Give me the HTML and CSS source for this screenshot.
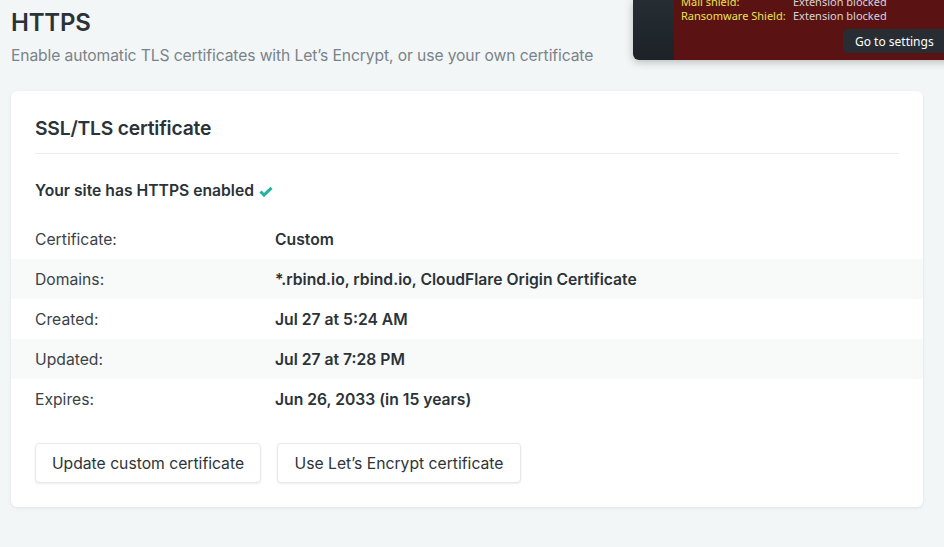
FILE: index.html
```html
<!DOCTYPE html>
<html>
<head>
<meta charset="utf-8">
<link rel="stylesheet" href="styles.css">
</head>
<body>
<div class="page">
  <header class="head">
    <h1 class="title">HTTPS</h1>
    <p class="subtitle">Enable automatic TLS certificates with Let’s Encrypt, or use your own certificate</p>
  </header>
  <section class="card">
    <h2 class="card-title">SSL/TLS certificate</h2>
    <p class="status">Your site has HTTPS enabled <svg class="check" width="14" height="11" viewBox="0 0 14 11"><path d="M1.5 5.5 L5 9 L12.5 1.8" fill="none" stroke="#1fb2a0" stroke-width="3" stroke-linejoin="miter"/></svg></p>
    <dl class="rows">
      <div class="row"><dt>Certificate:</dt><dd>Custom</dd></div>
      <div class="row alt"><dt>Domains:</dt><dd>*.rbind.io, rbind.io, CloudFlare Origin Certificate</dd></div>
      <div class="row"><dt>Created:</dt><dd>Jul 27 at 5:24 AM</dd></div>
      <div class="row alt"><dt>Updated:</dt><dd>Jul 27 at 7:28 PM</dd></div>
      <div class="row"><dt>Expires:</dt><dd>Jun 26, 2033 (in 15 years)</dd></div>
    </dl>
    <div class="actions">
      <button class="btn btn-1">Update custom certificate</button>
      <button class="btn btn-2">Use Let’s Encrypt certificate</button>
    </div>
  </section>
</div>
<div class="popup">
  <div class="popup-side"></div>
  <div class="popup-main">
    <div class="line l1"><span class="k">Mail shield:</span><span class="v">Extension blocked</span></div>
    <div class="line"><span class="k">Ransomware Shield:</span><span class="v">Extension blocked</span></div>
    <button class="settings">Go to settings</button>
  </div>
</div>
</body>
</html>
```

FILE: styles.css
```css
* { box-sizing: border-box; }
html, body { margin: 0; padding: 0; }
body {
  background: #f3f6f7;
  font-family: Inter, "Noto Sans", sans-serif;
  color: #2d3439;
  width: 944px;
  height: 547px;
  overflow: hidden;
  position: relative;
}
.page { padding: 8px 21px 0 11px; }
.head { height: 83px; }
.title {
  margin: 0;
  font-size: 24px;
  font-weight: 600;
  line-height: 30px;
  color: #2b3338;
  letter-spacing: -0.2px;
}
.subtitle {
  margin: 8px 0 0;
  font-size: 15.65px;
  line-height: 20px;
  color: #7a8389;
  letter-spacing: -0.1px;
}
.card {
  background: #fff;
  border-radius: 6px;
  box-shadow: 0 1px 3px rgba(30, 45, 60, 0.1);
  padding: 24px 0 24px;
  width: 912px;
  height: 416px;
}
.card-title {
  margin: 0 24px;
  font-size: 19.3px;
  font-weight: 600;
  line-height: 26px;
  padding: 0 0 12px;
  border-bottom: 1px solid #ebedef;
  color: #2b3338;
  letter-spacing: -0.2px;
}
.status {
  margin: 0 24px;
  height: 65px;
  display: flex;
  align-items: center;
  font-size: 15.7px;
  font-weight: 600;
  padding-top: 8px;
  color: #2b3338;
}
.check { margin-left: 5px; margin-top: 1px; }
.rows { margin: 0; }
.row {
  display: flex;
  align-items: center;
  height: 40px;
  padding: 0 24px;
  font-size: 15.7px;
}
.row.alt { background: #f8f9f9; }
.row dt { width: 240px; color: #3a4247; }
.row dd { margin: 0; font-weight: 600; color: #2b3338; }
.actions {
  display: flex;
  gap: 16px;
  padding: 24px 24px 0;
}
.btn {
  font-family: inherit;
  font-size: 15.7px;
  color: #2d3439;
  background: #fff;
  border: 1px solid #e6e9eb;
  border-radius: 4px;
  box-shadow: 0 1px 2px rgba(0, 0, 0, 0.08);
  height: 40px;
  padding: 0 14px;
}
.btn-1 { width: 226px; }
.btn-2 { width: 244px; }
.popup {
  position: absolute;
  left: 633px;
  top: 0;
  width: 320px;
  height: 60px;
  display: flex;
  border-radius: 0 0 0 6px;
  overflow: hidden;
  box-shadow: 0 2px 8px rgba(0, 0, 0, 0.25);
  font-family: "Noto Sans", Inter, sans-serif;
  font-size: 11px;
}
.popup-side {
  width: 41px;
  background: linear-gradient(#262d33, #1c2227);
}
.popup-main {
  flex: 1;
  background: #5a1212;
  padding: 0 0 0 7px;
  position: relative;
}
.line { display: flex; line-height: 14px; }
.l1 { margin-top: -5px; }
.k { width: 112px; color: #eae351; }
.v { color: #d6d4dc; }
.settings {
  position: absolute;
  left: 169px;
  top: 29px;
  width: 120px;
  height: 24px;
  background: #272d33;
  border: none;
  border-radius: 5px 0 0 5px;
  color: #fff;
  font-family: inherit;
  font-size: 12px;
  text-align: left;
  padding-left: 12px;
}
```
